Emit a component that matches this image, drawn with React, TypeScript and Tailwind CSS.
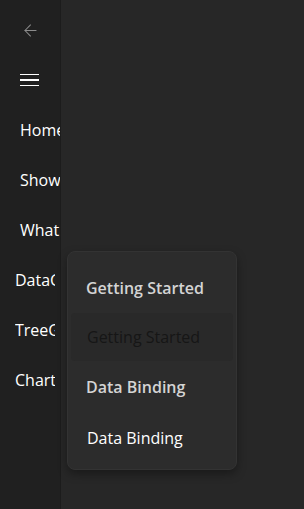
import { ArrowLeft } from "lucide-react";

const navTop = ["Home", "Show", "What"];
const navBottom = ["DataGrid", "TreeGrid", "Charts"];

const App = () => {
  return (
    <div
      className="flex w-[304px] h-[509px] bg-[#272727] text-white overflow-hidden relative"
      style={{ fontFamily: '"Open Sans", "Noto Sans", sans-serif' }}
    >
      {/* side nav */}
      <div className="w-[61px] shrink-0 h-full bg-[#202020] overflow-hidden pt-[5px] border-r border-[#1c1c1c]">
        <div className="h-[50px] flex items-center pl-[21px] text-[#8c8c8c]">
          <ArrowLeft size={19} strokeWidth={1.3} />
        </div>
        <div className="h-[50px] flex items-center pl-[20px]">
          <div className="flex flex-col gap-[4px]">
            <span className="block w-[19px] h-[1.5px] bg-white" />
            <span className="block w-[19px] h-[1.5px] bg-white" />
            <span className="block w-[19px] h-[1.5px] bg-white" />
          </div>
        </div>
        {navTop.map((n) => (
          <div key={n} className="h-[50px] flex items-center pl-[20px] text-[16px] whitespace-nowrap">
            {n}
          </div>
        ))}
        {navBottom.map((n) => (
          <div key={n} className="h-[50px] flex items-center pl-[15px]">
            <div className="w-[40px] overflow-hidden text-[16px] whitespace-nowrap">{n}</div>
          </div>
        ))}
      </div>

      {/* flyout */}
      <div className="absolute left-[67px] top-[251px] w-[170px] h-[219px] rounded-lg bg-[#2c2c2c] border border-[#333333] shadow-[0_4px_10px_rgba(0,0,0,0.35)] pt-[11px] px-[3px]">
        <div className="h-[50px] flex items-center pl-[15px] text-[16px] font-semibold text-[#d4d4d4] whitespace-nowrap">
          Getting Started
        </div>
        <div className="h-[48px] flex items-center pl-[16px] text-[16px] text-[#161616] bg-[#292929] rounded whitespace-nowrap">
          Getting Started
        </div>
        <div className="h-[52px] flex items-center pl-[15px] text-[16px] font-semibold text-[#d4d4d4] whitespace-nowrap">
          Data Binding
        </div>
        <div className="h-[50px] flex items-center pl-[16px] text-[16px] text-white whitespace-nowrap">
          Data Binding
        </div>
      </div>
    </div>
  );
};

export default App;
